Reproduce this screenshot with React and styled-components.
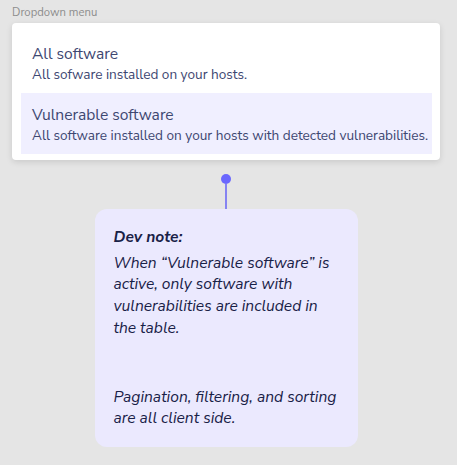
import React from 'react';
import styled, { createGlobalStyle } from 'styled-components';

const GlobalStyle = createGlobalStyle`
  html, body {
    margin: 0;
    padding: 0;
    background: #e5e5e5;
  }
  body {
    font-family: "Nunito Sans", Inter, "Noto Sans", sans-serif;
    -webkit-font-smoothing: antialiased;
  }
`;

const Page = styled.div`
  width: 457px;
  height: 465px;
  box-sizing: border-box;
  padding: 6px 17px 0 12px;
  display: flex;
  flex-direction: column;
  align-items: stretch;
`;

const Label = styled.div`
  font-size: 11.3px;
  line-height: 14px;
  color: #8d8d8d;
  margin-bottom: 3px;
`;

const Menu = styled.div`
  background: #fff;
  border-radius: 4px;
  box-shadow: 0 2px 6px rgba(0, 0, 0, 0.12);
  padding: 9px 8px 6px 9px;
  display: flex;
  flex-direction: column;
`;

const Option = styled.div`
  padding: 12px 4px 9px 11px;
  background: ${p => (p.$active ? '#f0efff' : 'transparent')};
  color: #3e4771;
  white-space: nowrap;
`;

const OptionTitle = styled.div`
  font-size: 15.6px;
  line-height: 21px;
`;

const OptionText = styled.div`
  font-size: 13.6px;
  line-height: 19px;
`;

const Connector = styled.div`
  display: flex;
  flex-direction: column;
  align-items: center;
  margin-top: 14px;
`;

const Dot = styled.div`
  width: 10px;
  height: 10px;
  border-radius: 50%;
  background: #6a67fe;
`;

const Stem = styled.div`
  width: 2px;
  height: 25px;
  background: #8583f2;
`;

const Note = styled.div`
  width: 263px;
  box-sizing: border-box;
  background: #ebe9fe;
  border-radius: 12px;
  padding: 18px 19px 17px;
  color: #192147;
  font-size: 15.6px;
  line-height: 21.7px;
  font-style: italic;
  white-space: nowrap;
`;

const NoteTitle = styled.p`
  margin: 0 0 4px;
  font-weight: 700;
`;

const NoteText = styled.p`
  margin: 0;
  & + & {
    margin-top: 47px;
  }
`;

export default function App() {
  return (
    <>
      <GlobalStyle />
      <Page>
        <Label>Dropdown menu</Label>
        <Menu>
          <Option>
            <OptionTitle>All software</OptionTitle>
            <OptionText>All sofware installed on your hosts.</OptionText>
          </Option>
          <Option $active>
            <OptionTitle>Vulnerable software</OptionTitle>
            <OptionText>All software installed on your hosts with detected vulnerabilities.</OptionText>
          </Option>
        </Menu>
        <Connector>
          <Dot />
          <Stem />
          <Note>
            <NoteTitle>Dev note:</NoteTitle>
            <NoteText>
              When “Vulnerable software” is<br />
              active, only software with<br />
              vulnerabilities are included in<br />
              the table.
            </NoteText>
            <NoteText>
              Pagination, filtering, and sorting<br />
              are all client side.
            </NoteText>
          </Note>
        </Connector>
      </Page>
    </>
  );
}
